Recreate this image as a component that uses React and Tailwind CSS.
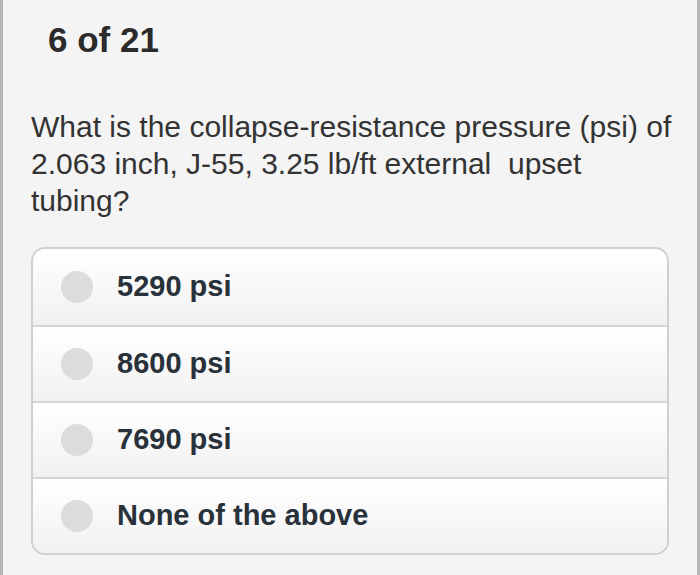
import React from 'react';

const options = ['5290 psi', '8600 psi', '7690 psi', 'None of the above'];

export default function App() {
    return (
        <div className="w-[700px] h-[575px] bg-[#f4f4f4] border-l-[3px] border-r-[3px] border-[#b5b5b5] overflow-hidden" style={{ fontFamily: '"Liberation Sans", Arial, sans-serif' }}>
            <div className="pt-[20px] pl-[45px]">
                <h1 className="text-[35px] leading-[40px] font-bold text-[#2b2b2b]">6 of 21</h1>
            </div>

            <p className="mt-[48px] pl-[28px] w-[670px] text-[30px] leading-[37px] text-[#333333]">
                What is the collapse-resistance pressure (psi) of 2.063 inch, J-55, 3.25 lb/ft external&nbsp; upset tubing?
            </p>

            <div className="mt-[28px] ml-[28px] w-[638px] border-2 border-[#d0d0d0] rounded-[14px] overflow-hidden">
                {options.map((opt, i) => (
                    <div
                        key={i}
                        className={`h-[76px] flex items-center bg-gradient-to-b from-[#ffffff] to-[#f1f1f1] ${i > 0 ? 'border-t-2 border-[#d4d4d4]' : ''}`}
                    >
                        <span className="ml-[28px] w-[32px] h-[32px] rounded-full bg-[#dcdcdc] shrink-0" />
                        <span className="ml-[24px] text-[29px] font-bold text-[#29313a]">{opt}</span>
                    </div>
                ))}
            </div>
        </div>
    );
}
